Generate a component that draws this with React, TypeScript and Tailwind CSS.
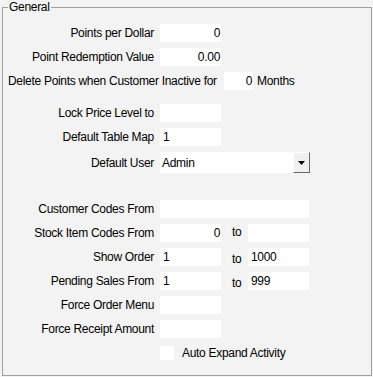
const font = { fontFamily: '"Liberation Sans", Arial, sans-serif' };

const Box = ({ w, value = '', right = false }: { w: string; value?: string; right?: boolean }) => (
  <div
    className={`${w} h-[18px] bg-white flex items-center text-[12px] leading-[14px] text-black ${
      right ? 'justify-end pr-[1px]' : 'pl-[3px]'
    }`}
  >
    {value}
  </div>
);

const Label = ({ text }: { text: string }) => (
  <div className="w-[151px] mr-[6px] text-right whitespace-nowrap text-[12px] leading-[14px]">{text}</div>
);

const Row = ({ children, className = '' }: { children: React.ReactNode; className?: string }) => (
  <div className={`flex items-center h-[18px] ${className}`}>{children}</div>
);

const App = () => {
  return (
    <div className="w-[373px] h-[377px] bg-[#f3f3f3] text-black tracking-[-0.3px]" style={font}>
      <fieldset className="ml-[2px] w-[370px] h-[376px] border border-[#a0a0a0] p-0">
        <legend className="ml-[5px] px-[1px] text-[12px] leading-[14px]">General</legend>

        <div className="flex flex-col pt-[10px]">
          <Row>
            <Label text="Points per Dollar" />
            <Box w="w-[61px]" value="0" right />
          </Row>
          <Row className="mt-[6px]">
            <Label text="Point Redemption Value" />
            <Box w="w-[61px]" value="0.00" right />
          </Row>
          <Row className="mt-[6px]">
            <div className="w-[221px] pl-[5px] whitespace-nowrap text-[12px] leading-[14px]">
              Delete Points when Customer Inactive for
            </div>
            <Box w="w-[29px]" value="0" right />
            <span className="ml-[4px] text-[12px] leading-[14px]">Months</span>
          </Row>

          <Row className="mt-[14px]">
            <Label text="Lock Price Level to" />
            <Box w="w-[61px]" />
          </Row>
          <Row className="mt-[6px]">
            <Label text="Default Table Map" />
            <Box w="w-[61px]" value="1" />
          </Row>
          <div className="flex items-center h-[21px] mt-[6px]">
            <Label text="Default User" />
            <div className="w-[150px] h-[21px] bg-white flex items-center">
              <span className="flex-1 pl-[2px] text-[12px] leading-[14px]">Admin</span>
              <div className="w-[17px] h-[21px] bg-[#f0f0f0] border-t border-l border-t-white border-l-white border-b border-r border-b-[#696969] border-r-[#696969] flex items-center justify-center">
                <svg width="7" height="4" viewBox="0 0 7 4">
                  <path d="M0 0h7L3.5 4z" fill="#000" />
                </svg>
              </div>
            </div>
          </div>

          <Row className="mt-[27px]">
            <Label text="Customer Codes From" />
            <Box w="w-[149px]" />
          </Row>
          <Row className="mt-[6px]">
            <Label text="Stock Item Codes From" />
            <Box w="w-[61px]" value="0" right />
            <span className="w-[27px] pl-[11px] self-start pt-[1px] text-[12px] leading-[14px]">to</span>
            <Box w="w-[61px]" />
          </Row>
          <Row className="mt-[6px]">
            <Label text="Show Order" />
            <Box w="w-[61px]" value="1" />
            <span className="w-[27px] pl-[11px] self-end text-[12px] leading-[14px]">to</span>
            <Box w="w-[61px]" value="1000" />
          </Row>
          <Row className="mt-[6px]">
            <Label text="Pending Sales From" />
            <Box w="w-[61px]" value="1" />
            <span className="w-[27px] pl-[11px] self-end text-[12px] leading-[14px]">to</span>
            <Box w="w-[61px]" value="999" />
          </Row>
          <Row className="mt-[6px]">
            <Label text="Force Order Menu" />
            <Box w="w-[61px]" />
          </Row>
          <Row className="mt-[6px]">
            <Label text="Force Receipt Amount" />
            <Box w="w-[61px]" />
          </Row>
          <div className="flex items-center h-[14px] mt-[8px]">
            <div className="w-[151px] mr-[6px]" />
            <div className="w-[14px] h-[14px] bg-white" />
            <span className="ml-[8px] text-[12px] leading-[14px]">Auto Expand Activity</span>
          </div>
        </div>
      </fieldset>
    </div>
  );
};

export default App;
